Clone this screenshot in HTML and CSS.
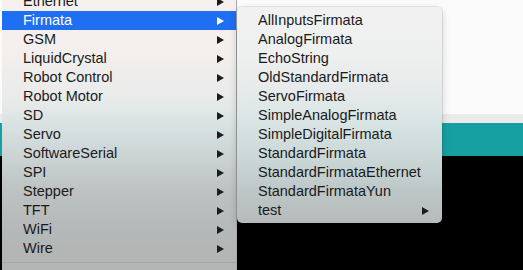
FILE: index.html
```html
<!DOCTYPE html>
<html>
<head>
<meta charset="utf-8">
<link rel="stylesheet" href="styles.css">
</head>
<body>
<div class="desktop">
  <div class="bg-white"></div>
  <div class="bg-gray"></div>
  <div class="bg-teal"></div>
  <div class="bg-black"></div>

  <ul class="menu main-menu">
    <li class="item"><span>Ethernet</span><i class="arrow"></i></li>
    <li class="item active"><span>Firmata</span><i class="arrow"></i></li>
    <li class="item"><span>GSM</span><i class="arrow"></i></li>
    <li class="item"><span>LiquidCrystal</span><i class="arrow"></i></li>
    <li class="item"><span>Robot Control</span><i class="arrow"></i></li>
    <li class="item"><span>Robot Motor</span><i class="arrow"></i></li>
    <li class="item"><span>SD</span><i class="arrow"></i></li>
    <li class="item"><span>Servo</span><i class="arrow"></i></li>
    <li class="item"><span>SoftwareSerial</span><i class="arrow"></i></li>
    <li class="item"><span>SPI</span><i class="arrow"></i></li>
    <li class="item"><span>Stepper</span><i class="arrow"></i></li>
    <li class="item"><span>TFT</span><i class="arrow"></i></li>
    <li class="item"><span>WiFi</span><i class="arrow"></i></li>
    <li class="item"><span>Wire</span><i class="arrow"></i></li>
    <li class="separator"></li>
  </ul>

  <ul class="menu sub-menu">
    <li class="item"><span>AllInputsFirmata</span></li>
    <li class="item"><span>AnalogFirmata</span></li>
    <li class="item"><span>EchoString</span></li>
    <li class="item"><span>OldStandardFirmata</span></li>
    <li class="item"><span>ServoFirmata</span></li>
    <li class="item"><span>SimpleAnalogFirmata</span></li>
    <li class="item"><span>SimpleDigitalFirmata</span></li>
    <li class="item"><span>StandardFirmata</span></li>
    <li class="item"><span>StandardFirmataEthernet</span></li>
    <li class="item"><span>StandardFirmataYun</span></li>
    <li class="item"><span>test</span><i class="arrow"></i></li>
  </ul>
</div>
</body>
</html>
```
FILE: styles.css
```css
* { box-sizing: border-box; }
html, body {
  margin: 0;
  padding: 0;
  width: 523px;
  height: 270px;
  overflow: hidden;
}
body {
  font-family: "Liberation Sans", Arial, sans-serif;
  font-size: 14.5px;
  color: #1a1a1a;
}
.desktop {
  position: relative;
  width: 523px;
  height: 270px;
  display: flex;
  flex-direction: column;
  overflow: hidden;
}
.bg-white { height: 114px; background: #fbfbfb; }
.bg-gray { height: 9px; background: #ebebeb; }
.bg-teal { height: 33px; background: #17a0a2; }
.bg-black { flex: 1; background: #000; }

.menu {
  list-style: none;
  margin: 0;
  padding: 0;
}
.item {
  height: 19px;
  line-height: 19px;
  display: flex;
  align-items: center;
  justify-content: space-between;
  padding-left: 21px;
  white-space: nowrap;
}
.item span { line-height: 19px; }
.arrow {
  display: block;
  width: 0;
  height: 0;
  border-left: 7px solid #1c1c1c;
  border-top: 4.5px solid transparent;
  border-bottom: 4.5px solid transparent;
}

.main-menu {
  position: absolute;
  left: 2px;
  top: -8px;
  width: 235px;
  height: 290px;
  border-right: 1px solid #a9abab;
  background: linear-gradient(to bottom,
    #f7f1ee 0px,
    #f3efed 60px,
    #e8eaea 110px,
    #d8e1e1 135px,
    #c9d1d1 170px,
    #bcc1c1 200px,
    #b5b8b8 240px,
    #b3b4b4 270px);
}
.main-menu .item { padding-right: 12px; }
.main-menu .item.active {
  background: #1f6ff2;
  color: #fff;
}
.main-menu .item.active .arrow { border-left-color: #fff; }
.separator {
  height: 12px;
  position: relative;
}
.separator::after {
  content: "";
  position: absolute;
  left: 0;
  right: 0;
  top: 4px;
  height: 1px;
  background: #a6a8a8;
}

.sub-menu {
  position: absolute;
  left: 237px;
  top: 7px;
  width: 205px;
  height: 216px;
  padding: 4px 0;
  border-radius: 5px;
  background: linear-gradient(to bottom,
    #f1f1f1 0px,
    #eeefef 50px,
    #e6eaea 85px,
    #d9e4e4 115px,
    #cbd8d8 150px,
    #bdc6c6 185px,
    #b7baba 216px);
  box-shadow: 0 0 0 1px rgba(0,0,0,0.08), 0 3px 8px rgba(0,0,0,0.18);
}
.sub-menu .item { padding-right: 13px; }
```
